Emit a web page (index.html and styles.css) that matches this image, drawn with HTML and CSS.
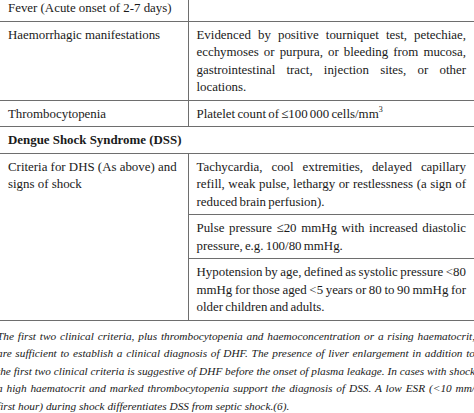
FILE: index.html
```html
<!DOCTYPE html>
<html>
<head>
<meta charset="utf-8">
<link rel="stylesheet" href="styles.css">
</head>
<body>
<div class="page">
<table class="criteria">
  <colgroup><col class="c1"><col class="c2"></colgroup>
  <tr class="first">
    <td class="left nowrap">Fever (Acute onset of 2-7 days)</td>
    <td class="right"></td>
  </tr>
  <tr>
    <td class="left">Haemorrhagic manifestations</td>
    <td class="right">Evidenced by positive tourniquet test, petechiae, ecchymoses or purpura, or bleeding from mucosa, gastrointestinal tract, injection sites, or other locations.</td>
  </tr>
  <tr>
    <td class="left">Thrombocytopenia</td>
    <td class="right">Platelet count of ≤100 000 cells/mm<sup>3</sup></td>
  </tr>
  <tr>
    <td class="head" colspan="2">Dengue Shock Syndrome (DSS)</td>
  </tr>
  <tr>
    <td class="left" rowspan="3">Criteria for DHS (As above) and signs of shock</td>
    <td class="right">Tachycardia, cool extremities, delayed capillary refill, weak pulse, lethargy or restlessness (a sign of reduced brain perfusion).</td>
  </tr>
  <tr>
    <td class="right">Pulse pressure ≤20 mmHg with increased diastolic pressure, e.g. 100/80 mmHg.</td>
  </tr>
  <tr>
    <td class="right">Hypotension by age, defined as systolic pressure &lt;80 mmHg for those aged &lt;5 years or 80 to 90 mmHg for older children and adults.</td>
  </tr>
</table>
<div class="note">
  <span class="line">The first two clinical criteria, plus thrombocytopenia and haemoconcentration or a rising haematocrit,</span>
  <span class="line">are sufficient to establish a clinical diagnosis of DHF. The presence of liver enlargement in addition to</span>
  <span class="line">the first two clinical criteria is suggestive of DHF before the onset of plasma leakage. In cases with shock,</span>
  <span class="line">a high haematocrit and marked thrombocytopenia support the diagnosis of DSS. A low ESR (&lt;10 mm/</span>
  <span class="line last">first hour) during shock differentiates DSS from septic shock.(6).</span>
</div>
</div>
</body>
</html>
```
FILE: styles.css
```css
html, body {
  margin: 0;
  padding: 0;
  background: #ffffff;
  overflow: hidden;
}
.page {
  width: 474px;
  height: 413px;
  overflow: hidden;
  font-family: "Liberation Serif", "Times New Roman", Times, "DejaVu Serif", serif;
  color: #1a1a1a;
}
.criteria {
  width: 474px;
  table-layout: fixed;
  border-collapse: collapse;
  font-size: 12.9px;
  line-height: 17.5px;
}
.c1 { width: 188px; }
.c2 { width: 286px; }
.criteria td {
  vertical-align: top;
  padding: 5px 8px 3px 8px;
  border-top: 1.5px solid #6e6e6e;
  border-bottom: 1.5px solid #6e6e6e;
}
.criteria td.left {
  border-right: 1.5px solid #6e6e6e;
}
.criteria td.nowrap {
  white-space: nowrap;
}
.criteria td.right {
  text-align: justify;
  word-spacing: -1px;
  padding-right: 8px;
}
.criteria tr.first td {
  border-top: none;
  padding-top: 0;
}
.criteria td.head {
  font-weight: bold;
}
sup {
  font-size: 8px;
  line-height: 0;
  vertical-align: 6px;
}
.note {
  margin: 7px -1px 0 -3px;
  font-style: italic;
  font-size: 11.3px;
  line-height: 17.5px;
}
.note .line {
  display: block;
  white-space: nowrap;
  text-align: justify;
  text-align-last: justify;
}
.note .line.last {
  text-align-last: left;
}
```
